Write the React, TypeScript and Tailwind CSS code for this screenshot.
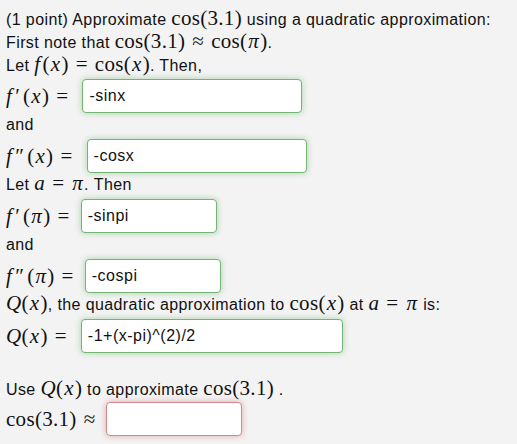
import React from 'react';

const Mi = ({ children }: { children: React.ReactNode }) => <span className="italic">{children}</span>;

// italic letters in the math font are a bit wider than Times
const X = () => <span className="px-[1px] italic">x</span>;
const Pi = () => <span className="px-[1px] italic">π</span>;
const F = () => <span className="mr-[2px] italic">f</span>;

const M = ({ children }: { children: React.ReactNode }) => (
  <span className="font-['Liberation_Serif','DejaVu_Serif',serif] text-[21px] leading-none tracking-[0.3px] whitespace-nowrap">
    {children}
  </span>
);

const Rel = ({ children }: { children: React.ReactNode }) => <span className="mx-[7px]">{children}</span>;

const Prime = ({ n }: { n: 1 | 2 }) => <span className="ml-[1px] mr-[3px]">{n === 1 ? '′' : '″'}</span>;

const Answer = ({ value, w, bad }: { value: string; w: string; bad?: boolean }) => (
  <input
    readOnly
    value={value}
    className={
      'h-[34px] rounded-[4px] bg-white px-[6px] text-[16px] tracking-[0.5px] text-[#111] outline-none ' +
      w +
      (bad
        ? ' border border-[#d08a8a] shadow-[0_0_6px_rgba(200,60,60,0.4)]'
        : ' border border-[#74b474] shadow-[0_0_6px_rgba(60,160,60,0.4)]')
    }
  />
);

export default function App() {
  return (
    <div className="min-h-screen w-full bg-[#f3f3f3] pl-[6px] pt-[8px] font-['Liberation_Sans',Arial,sans-serif] text-[16px] tracking-[0.4px] text-[#111]">
      <div className="leading-[23px]">
        (1 point) Approximate <M>cos(3.1)</M> using a quadratic approximation:
      </div>
      <div className="leading-[23px]">
        First note that{' '}
        <M>
          cos(3.1)<Rel>≈</Rel>cos(<Pi />)
        </M>
        .
      </div>
      <div className="leading-[23px]">
        Let{' '}
        <M>
          <F />(<X />)<Rel>=</Rel>cos(<X />)
        </M>
        . Then,
      </div>

      <div className="mt-[2px] flex items-center">
        <M>
          <F />
          <Prime n={1} />(<X />)<Rel>=</Rel>
        </M>
        <span className="ml-[7px]">
          <Answer value="-sinx" w="w-[220px]" />
        </span>
      </div>
      <div className="h-[24px] leading-[24px]">and</div>

      <div className="mt-[2px] flex items-center">
        <M>
          <F />
          <Prime n={2} />(<X />)<Rel>=</Rel>
        </M>
        <span className="ml-[7px]">
          <Answer value="-cosx" w="w-[220px]" />
        </span>
      </div>
      <div className="h-[24px] leading-[24px]">
        Let{' '}
        <M>
          <Mi>a</Mi>
          <Rel>=</Rel>
          <Pi />
        </M>
        . Then
      </div>

      <div className="mt-[2px] flex items-center">
        <M>
          <F />
          <Prime n={1} />(<Pi />)<Rel>=</Rel>
        </M>
        <span className="ml-[4px]">
          <Answer value="-sinpi" w="w-[136px]" />
        </span>
      </div>
      <div className="h-[24px] leading-[24px]">and</div>

      <div className="mt-[2px] flex items-center">
        <M>
          <F />
          <Prime n={2} />(<Pi />)<Rel>=</Rel>
        </M>
        <span className="ml-[4px]">
          <Answer value="-cospi" w="w-[136px]" />
        </span>
      </div>
      <div className="h-[24px] leading-[24px]">
        <M>
          <Mi>Q</Mi>(<X />)
        </M>
        , the quadratic approximation to{' '}
        <M>
          cos(<X />)
        </M>{' '}
        at{' '}
        <M>
          <Mi>a</Mi>
          <Rel>=</Rel>
          <Pi />
        </M>{' '}
        is:
      </div>

      <div className="mt-[2px] flex items-center">
        <M>
          <Mi>Q</Mi>(<X />)<Rel>=</Rel>
        </M>
        <span className="ml-[7px]">
          <Answer value="-1+(x-pi)^(2)/2" w="w-[262px]" />
        </span>
      </div>

      <div className="mt-[25px] h-[24px] leading-[24px]">
        Use{' '}
        <M>
          <Mi>Q</Mi>(<X />)
        </M>{' '}
        to approximate <M>cos(3.1)</M> .
      </div>
      <div className="flex items-center">
        <M>
          cos(3.1)<Rel>≈</Rel>
        </M>
        <span className="ml-[4px]">
          <Answer value="" w="w-[136px]" bad />
        </span>
      </div>
    </div>
  );
}
